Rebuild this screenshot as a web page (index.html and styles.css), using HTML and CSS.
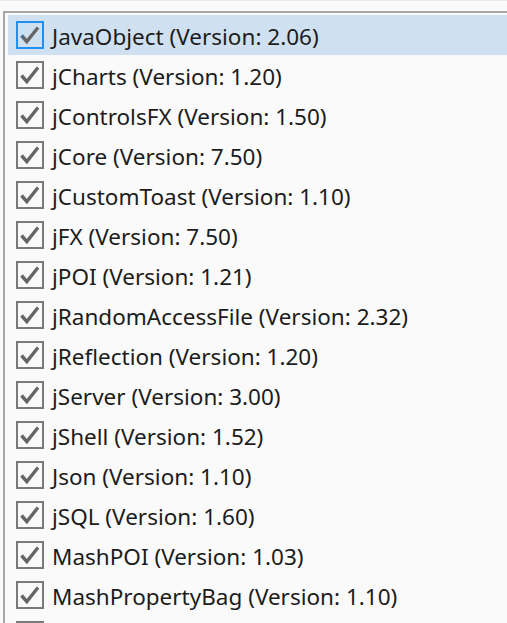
FILE: index.html
```html
<!DOCTYPE html>
<html>
<head>
<meta charset="utf-8">
<link rel="stylesheet" href="styles.css">
</head>
<body>
<div class="top-strip"></div>
<div class="list">
  <div class="row selected"><span class="box"><svg viewBox="0 0 28 28"><path d="M5.5 14.5 L10.8 20.5 L22 6.5"/></svg></span><span class="label">JavaObject (Version: 2.06)</span></div>
  <div class="row"><span class="box"><svg viewBox="0 0 28 28"><path d="M5.5 14.5 L10.8 20.5 L22 6.5"/></svg></span><span class="label">jCharts (Version: 1.20)</span></div>
  <div class="row"><span class="box"><svg viewBox="0 0 28 28"><path d="M5.5 14.5 L10.8 20.5 L22 6.5"/></svg></span><span class="label">jControlsFX (Version: 1.50)</span></div>
  <div class="row"><span class="box"><svg viewBox="0 0 28 28"><path d="M5.5 14.5 L10.8 20.5 L22 6.5"/></svg></span><span class="label">jCore (Version: 7.50)</span></div>
  <div class="row"><span class="box"><svg viewBox="0 0 28 28"><path d="M5.5 14.5 L10.8 20.5 L22 6.5"/></svg></span><span class="label">jCustomToast (Version: 1.10)</span></div>
  <div class="row"><span class="box"><svg viewBox="0 0 28 28"><path d="M5.5 14.5 L10.8 20.5 L22 6.5"/></svg></span><span class="label">jFX (Version: 7.50)</span></div>
  <div class="row"><span class="box"><svg viewBox="0 0 28 28"><path d="M5.5 14.5 L10.8 20.5 L22 6.5"/></svg></span><span class="label">jPOI (Version: 1.21)</span></div>
  <div class="row"><span class="box"><svg viewBox="0 0 28 28"><path d="M5.5 14.5 L10.8 20.5 L22 6.5"/></svg></span><span class="label">jRandomAccessFile (Version: 2.32)</span></div>
  <div class="row"><span class="box"><svg viewBox="0 0 28 28"><path d="M5.5 14.5 L10.8 20.5 L22 6.5"/></svg></span><span class="label">jReflection (Version: 1.20)</span></div>
  <div class="row"><span class="box"><svg viewBox="0 0 28 28"><path d="M5.5 14.5 L10.8 20.5 L22 6.5"/></svg></span><span class="label">jServer (Version: 3.00)</span></div>
  <div class="row"><span class="box"><svg viewBox="0 0 28 28"><path d="M5.5 14.5 L10.8 20.5 L22 6.5"/></svg></span><span class="label">jShell (Version: 1.52)</span></div>
  <div class="row"><span class="box"><svg viewBox="0 0 28 28"><path d="M5.5 14.5 L10.8 20.5 L22 6.5"/></svg></span><span class="label">Json (Version: 1.10)</span></div>
  <div class="row"><span class="box"><svg viewBox="0 0 28 28"><path d="M5.5 14.5 L10.8 20.5 L22 6.5"/></svg></span><span class="label">jSQL (Version: 1.60)</span></div>
  <div class="row"><span class="box"><svg viewBox="0 0 28 28"><path d="M5.5 14.5 L10.8 20.5 L22 6.5"/></svg></span><span class="label">MashPOI (Version: 1.03)</span></div>
  <div class="row"><span class="box"><svg viewBox="0 0 28 28"><path d="M5.5 14.5 L10.8 20.5 L22 6.5"/></svg></span><span class="label">MashPropertyBag (Version: 1.10)</span></div>
  <div class="row"><span class="box"><svg viewBox="0 0 28 28"><path d="M5.5 14.5 L10.8 20.5 L22 6.5"/></svg></span></div>
</div>
</body>
</html>
```
FILE: styles.css
```css
html, body {
  margin: 0;
  padding: 0;
  background: #fafafa;
  overflow: hidden;
  height: 623px;
}
body {
  font-family: "Noto Sans", "Open Sans", sans-serif;
  color: #1c1c1c;
}
.top-strip {
  height: 10px;
  border-top: 1px solid #e8edf2;
  background: #fafafa;
}
.list {
  box-sizing: border-box;
  height: 612px;
  overflow: hidden;
  margin-left: 3px;
  border-left: 2px solid #a6a6a6;
  border-top: 2px solid #a9a9a9;
  padding: 2px 0 0 3px;
}
.row {
  height: 40px;
  display: flex;
  align-items: center;
  padding-left: 8px;
}
.row.selected {
  background: #cfe1f0;
}
.box {
  box-sizing: border-box;
  width: 28px;
  height: 28px;
  border: 2px solid #7a7a7a;
  background: #fafafa;
  display: flex;
  align-items: center;
  justify-content: center;
  flex: none;
}
.selected .box {
  border-color: #2090f0;
  background: #cfe1f0;
}
.box svg {
  width: 28px;
  height: 28px;
  flex: none;
}
.box path {
  fill: none;
  stroke: #666666;
  stroke-width: 3.4;
  stroke-linecap: butt;
  stroke-linejoin: miter;
}
.label {
  margin-left: 8px;
  font-size: 22.5px;
  white-space: nowrap;
  position: relative;
  top: 1px;
}
```
